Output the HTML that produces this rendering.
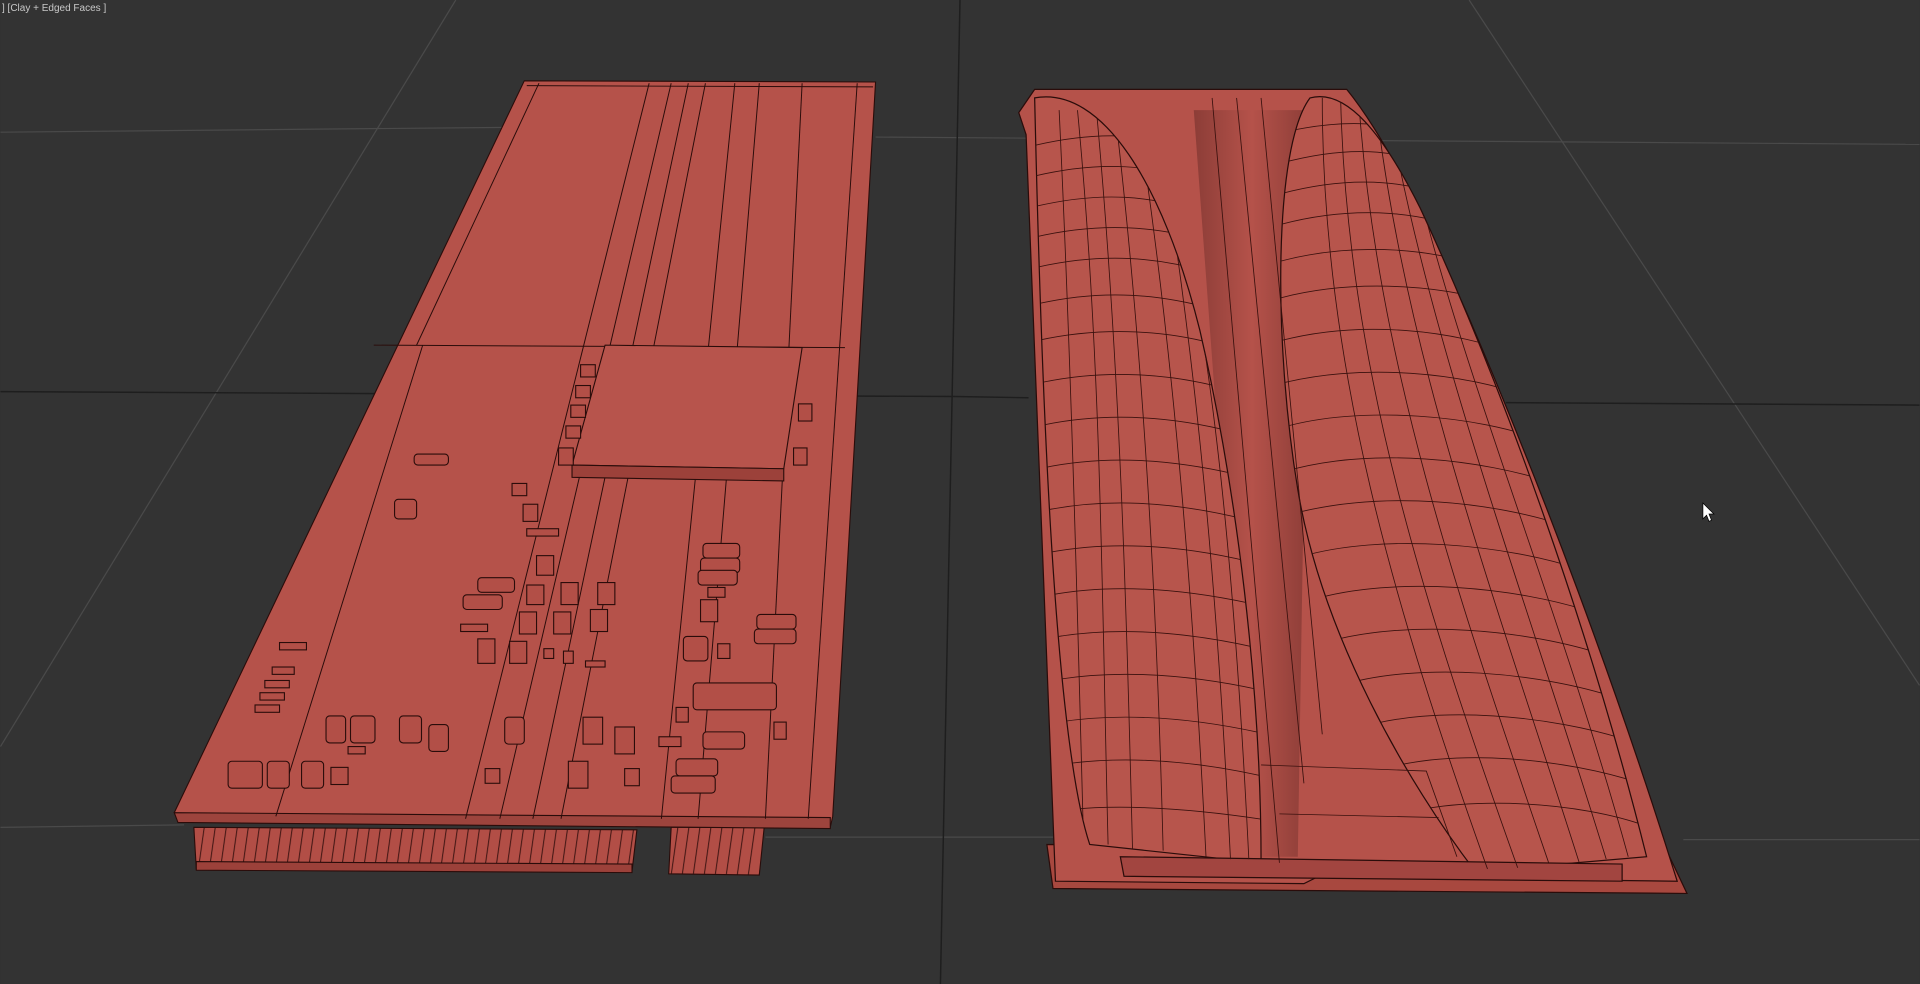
<!DOCTYPE html>
<html><head><meta charset="utf-8"><style>
html,body{margin:0;padding:0;background:#333333;width:1920px;height:984px;overflow:hidden}
svg{display:block}
.lbl{position:absolute;left:2px;top:3px;font:10px "Liberation Sans",sans-serif;color:#c8c8c8}
</style></head><body>
<div class="lbl">] [Clay + Edged Faces ]</div>
<svg width="1920" height="984" viewBox="0 0 1568 804" xmlns="http://www.w3.org/2000/svg">
<defs>
<pattern id="fing" width="9" height="40" patternUnits="userSpaceOnUse" patternTransform="skewX(-8)">
<rect width="9" height="40" fill="#b24e46"/><line x1="0.5" y1="0" x2="0.5" y2="40" stroke="#3a1210" stroke-width="0.8"/>
</pattern>
<clipPath id="lobeL"><path d="M845 80 C900 70 950 150 980 270 C1010 400 1030 560 1030 705 L890 690 C860 600 850 300 845 80 Z"/></clipPath>
<clipPath id="lobeR"><path d="M1070 80 C1100 72 1130 110 1160 170 C1230 320 1300 520 1345 700 L1205 712 C1150 640 1080 520 1060 400 C1040 280 1040 120 1070 80 Z"/></clipPath>
<linearGradient id="valley" x1="0" x2="1" y1="0" y2="0">
<stop offset="0" stop-color="#5a2320" stop-opacity="0.45"/><stop offset="0.5" stop-color="#5a2320" stop-opacity="0"/><stop offset="1" stop-color="#5a2320" stop-opacity="0.45"/>
</linearGradient>
</defs>
<rect width="1568" height="804" fill="#333333"/>
<g stroke="#4a4a4a" stroke-width="1" fill="none">
<line x1="0" y1="108" x2="420" y2="104"/><line x1="715" y1="112" x2="1568" y2="118"/>
<line x1="0" y1="676" x2="150" y2="674"/><line x1="625" y1="684" x2="860" y2="684"/><line x1="1375" y1="686" x2="1568" y2="686"/>
<line x1="372" y1="0" x2="0" y2="610"/><line x1="1200" y1="0" x2="1568" y2="560"/>
</g>
<g stroke="#1e1e1e" stroke-width="1.2"><line x1="784" y1="0" x2="768" y2="804"/><line x1="0" y1="320" x2="780" y2="324"/><line x1="780" y1="324" x2="840" y2="325"/><line x1="1230" y1="329" x2="1568" y2="331"/></g>
<g stroke="#2a0c0a" stroke-width="0.9">
<path d="M158 676 L520 678 L516 712 L160 710 Z" fill="url(#fing)"/>
<path d="M548 676 L624 676 L620 715 L546 714 Z" fill="url(#fing)"/>
<path d="M160 704 L516 706 L516 713 L160 711Z" fill="#9c413a"/>
<path d="M428 66 L715 67 L680 667 L678 676 L145 670 L142 664 Z" fill="#b5524a"/>
<path d="M142 664 L678 668 L678 677 L145 672Z" fill="#9d443d"/>
<g fill="none" stroke-width="0.8">
<line x1="305" y1="282" x2="690" y2="284"/>
<line x1="345" y1="282" x2="225" y2="667"/><line x1="440" y1="68" x2="340" y2="282"/>
<line x1="530" y1="68" x2="380" y2="669"/><line x1="548" y1="68" x2="408" y2="669"/>
<line x1="562" y1="68" x2="435" y2="669"/><line x1="576" y1="68" x2="458" y2="669"/>
<line x1="600" y1="68" x2="540" y2="669"/><line x1="620" y1="68" x2="570" y2="669"/>
<line x1="655" y1="68" x2="625" y2="669"/><line x1="700" y1="68" x2="660" y2="669"/>
<line x1="430" y1="70" x2="713" y2="71"/>
</g>
<path d="M494 282 L655 284 L640 383 L467 380 Z" fill="#b7544c"/>
<path d="M467 380 L640 383 L640 393 L467 390Z" fill="#9c413a"/>
<g fill="#b24f47">
<rect x="338" y="371" width="28" height="9" rx="3"/><rect x="322" y="408" width="18" height="16" rx="3"/>
<rect x="474" y="298" width="12" height="10"/><rect x="470" y="315" width="12" height="10"/><rect x="466" y="331" width="12" height="10"/><rect x="462" y="348" width="12" height="10"/><rect x="456" y="366" width="12" height="14"/>
<rect x="652" y="330" width="11" height="14"/><rect x="648" y="366" width="11" height="14"/>
<rect x="418" y="395" width="12" height="10"/><rect x="427" y="412" width="12" height="14"/><rect x="430" y="432" width="26" height="6"/>
<rect x="438" y="454" width="14" height="16"/><rect x="430" y="478" width="14" height="16"/><rect x="458" y="476" width="14" height="18"/><rect x="488" y="476" width="14" height="18"/>
<rect x="424" y="500" width="14" height="18"/><rect x="452" y="500" width="14" height="18"/><rect x="482" y="498" width="14" height="18"/>
<rect x="390" y="472" width="30" height="12" rx="3"/><rect x="378" y="486" width="32" height="12" rx="3"/><rect x="376" y="510" width="22" height="6"/>
<rect x="390" y="522" width="14" height="20"/><rect x="416" y="524" width="14" height="18"/><rect x="444" y="530" width="8" height="8"/><rect x="460" y="532" width="8" height="10"/><rect x="478" y="540" width="16" height="5"/>
<rect x="574" y="444" width="30" height="12" rx="3"/><rect x="572" y="456" width="32" height="12" rx="3"/><rect x="570" y="466" width="32" height="12" rx="3"/>
<rect x="578" y="480" width="14" height="8"/><rect x="572" y="490" width="14" height="18"/><rect x="618" y="502" width="32" height="12" rx="3"/><rect x="616" y="514" width="34" height="12" rx="3"/>
<rect x="558" y="520" width="20" height="20" rx="3"/><rect x="586" y="526" width="10" height="12"/>
<rect x="566" y="558" width="68" height="22" rx="3"/>
<rect x="228" y="525" width="22" height="6"/><rect x="222" y="545" width="18" height="6"/><rect x="216" y="556" width="20" height="6"/><rect x="212" y="566" width="20" height="6"/><rect x="208" y="576" width="20" height="6"/>
<rect x="266" y="585" width="16" height="22" rx="3"/><rect x="286" y="585" width="20" height="22" rx="3"/><rect x="326" y="585" width="18" height="22" rx="3"/><rect x="350" y="592" width="16" height="22" rx="3"/><rect x="284" y="610" width="14" height="6"/>
<rect x="186" y="622" width="28" height="22" rx="3"/><rect x="218" y="622" width="18" height="22" rx="3"/><rect x="246" y="622" width="18" height="22" rx="3"/><rect x="270" y="627" width="14" height="14"/>
<rect x="412" y="586" width="16" height="22" rx="3"/><rect x="396" y="628" width="12" height="12"/>
<rect x="476" y="586" width="16" height="22"/><rect x="502" y="594" width="16" height="22"/><rect x="464" y="622" width="16" height="22"/><rect x="510" y="628" width="12" height="14"/>
<rect x="552" y="578" width="10" height="12"/><rect x="538" y="602" width="18" height="8"/><rect x="574" y="598" width="34" height="14" rx="3"/><rect x="632" y="590" width="10" height="14"/>
<rect x="552" y="620" width="34" height="14" rx="3"/><rect x="548" y="634" width="36" height="14" rx="3"/>
</g>
</g>
<g stroke="#2a0c0a" stroke-width="1">
<path d="M855 690 L1360 692 L1378 730 L860 726 Z" fill="#a8483f"/>
<path d="M845 73 L1100 73 C1130 110 1160 170 1200 260 C1260 400 1320 560 1370 720 L1200 718 L1165 712 L1130 706 L1105 704 L1085 712 L1065 722 L862 720 L838 110 L832 92 Z" fill="#b5524a"/>
<path d="M975 90 L1070 90 L1060 700 L1020 700 Z" fill="url(#valley)" stroke="none"/>
<path d="M845 80 C900 70 950 150 980 270 C1010 400 1030 560 1030 705 L890 690 C860 600 850 300 845 80 Z" fill="#b7554c"/>
<path d="M1070 80 C1100 72 1130 110 1160 170 C1230 320 1300 520 1345 700 L1205 712 C1150 640 1080 520 1060 400 C1040 280 1040 120 1070 80 Z" fill="#b7554c"/>
<path d="M915 700 L1325 706 L1325 720 L918 716 Z" fill="#a24540"/>
</g>
<g stroke="#3a110e" stroke-width="0.7" fill="none" clip-path="url(#lobeL)">
<path d="M840 120 C900 105 940 110 990 125"/><path d="M840 145 C900 130 940 135 990 150"/><path d="M840 170 C900 155 940 160 990 175"/><path d="M840 195 C900 180 950 185 995 200"/><path d="M840 220 C900 205 950 210 995 225"/>
<path d="M840 250 C900 235 950 240 1000 255"/><path d="M840 280 C900 265 960 270 1005 285"/><path d="M840 315 C900 300 960 305 1010 320"/><path d="M840 350 C900 335 960 340 1015 355"/>
<path d="M840 385 C900 370 960 375 1020 390"/><path d="M840 420 C900 405 960 410 1020 425"/><path d="M840 455 C900 440 965 445 1025 460"/><path d="M840 490 C900 475 965 480 1030 495"/>
<path d="M840 525 C900 510 965 515 1030 530"/><path d="M840 560 C900 545 970 550 1035 565"/><path d="M840 595 C900 580 970 585 1035 600"/><path d="M840 630 C900 615 970 620 1035 635"/><path d="M850 665 C900 655 970 660 1035 670"/>
<path d="M865 90 C875 300 880 500 885 690"/><path d="M880 90 C900 300 900 500 905 690"/><path d="M895 85 C915 300 920 500 925 695"/><path d="M910 85 C935 300 945 500 950 695"/><path d="M930 100 C960 300 975 500 985 700"/><path d="M950 130 C980 320 995 500 1005 702"/><path d="M965 180 C995 320 1010 500 1020 702"/>
</g>
<g stroke="#3a110e" stroke-width="0.7" fill="none" clip-path="url(#lobeR)">
<path d="M1040 110 C1100 95 1140 100 1170 115"/><path d="M1040 135 C1110 115 1150 125 1180 140"/><path d="M1040 160 C1110 140 1160 150 1190 165"/><path d="M1040 185 C1110 165 1170 175 1200 190"/><path d="M1040 215 C1110 195 1180 205 1215 220"/>
<path d="M1040 245 C1110 225 1190 235 1230 250"/><path d="M1040 280 C1110 260 1190 270 1240 290"/><path d="M1040 315 C1110 295 1200 305 1250 325"/><path d="M1045 350 C1110 330 1210 340 1260 360"/><path d="M1050 385 C1120 365 1210 375 1270 395"/>
<path d="M1055 420 C1130 400 1220 410 1280 430"/><path d="M1062 455 C1130 435 1230 445 1290 465"/><path d="M1072 490 C1140 470 1240 480 1300 500"/><path d="M1082 525 C1150 505 1250 515 1310 535"/>
<path d="M1095 560 C1160 540 1260 550 1320 570"/><path d="M1110 595 C1170 575 1270 585 1330 605"/><path d="M1125 630 C1185 610 1280 620 1340 640"/><path d="M1145 665 C1200 650 1290 655 1345 675"/>
<path d="M1080 80 C1080 300 1140 500 1215 710"/><path d="M1095 80 C1100 300 1165 500 1240 710"/><path d="M1110 85 C1125 300 1195 500 1265 705"/><path d="M1125 95 C1150 300 1225 500 1290 705"/><path d="M1140 120 C1175 300 1250 500 1312 702"/><path d="M1160 160 C1200 320 1275 500 1330 700"/>
</g>
<g stroke="#3a110e" stroke-width="0.7" fill="none">
<path d="M990 80 L1045 705"/><path d="M1010 80 L1065 640"/><path d="M1030 80 L1080 600"/>
<path d="M1030 625 L1165 630 L1190 700"/><path d="M1045 665 L1175 668"/>
</g>
<path d="M1391 411 L1391 424 L1394 421 L1396 426 L1398 425 L1396 420 L1400 420 Z" fill="#fff" stroke="#000" stroke-width="0.6"/>
</svg>
</body></html>
